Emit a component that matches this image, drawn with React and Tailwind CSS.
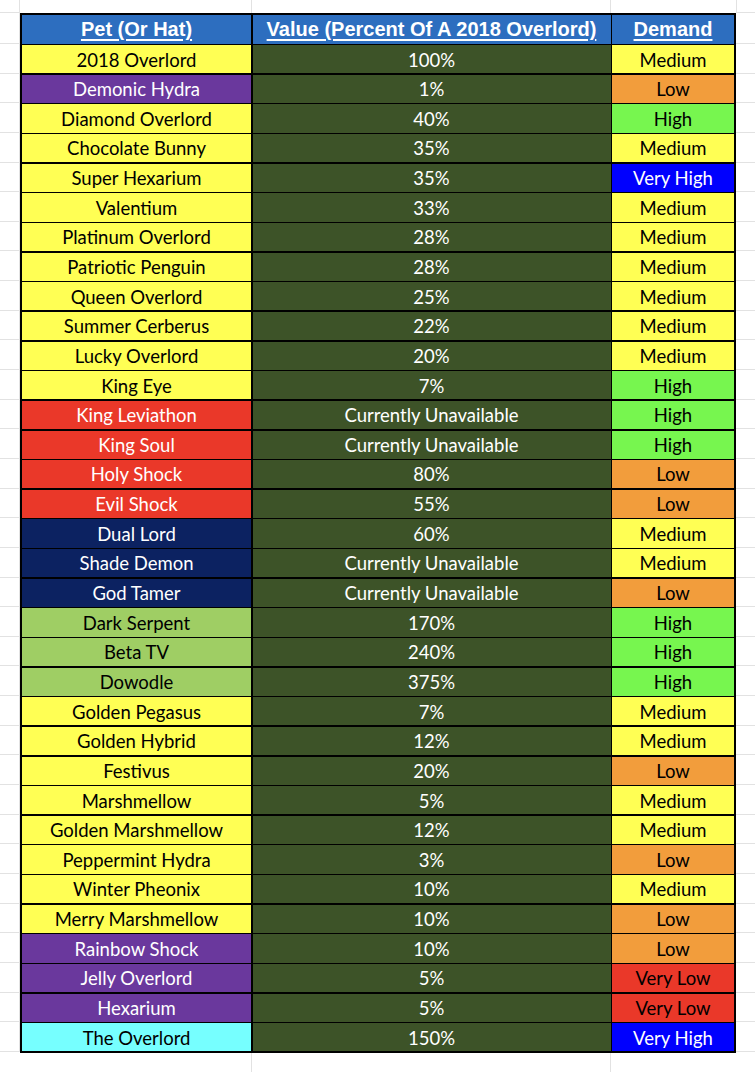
import React from "react";

const PET = {
  Y: "bg-[#ffff54] text-black",
  P: "bg-[#6a389d] text-white",
  R: "bg-[#ea3829] text-white",
  N: "bg-[#0c2261] text-white",
  G: "bg-[#9fce64] text-black",
  C: "bg-[#76ffff] text-black",
};

const DEMAND = {
  Medium: "bg-[#ffff54] text-black",
  Low: "bg-[#f29d3c] text-black",
  High: "bg-[#77f64f] text-black",
  "Very High": "bg-[#0000fe] text-white",
  "Very Low": "bg-[#ea3829] text-black",
};

const rows = [
  ["2018 Overlord", "Y", "100%", "Medium"],
  ["Demonic Hydra", "P", "1%", "Low"],
  ["Diamond Overlord", "Y", "40%", "High"],
  ["Chocolate Bunny", "Y", "35%", "Medium"],
  ["Super Hexarium", "Y", "35%", "Very High"],
  ["Valentium", "Y", "33%", "Medium"],
  ["Platinum Overlord", "Y", "28%", "Medium"],
  ["Patriotic Penguin", "Y", "28%", "Medium"],
  ["Queen Overlord", "Y", "25%", "Medium"],
  ["Summer Cerberus", "Y", "22%", "Medium"],
  ["Lucky Overlord", "Y", "20%", "Medium"],
  ["King Eye", "Y", "7%", "High"],
  ["King Leviathon", "R", "Currently Unavailable", "High"],
  ["King Soul", "R", "Currently Unavailable", "High"],
  ["Holy Shock", "R", "80%", "Low"],
  ["Evil Shock", "R", "55%", "Low"],
  ["Dual Lord", "N", "60%", "Medium"],
  ["Shade Demon", "N", "Currently Unavailable", "Medium"],
  ["God Tamer", "N", "Currently Unavailable", "Low"],
  ["Dark Serpent", "G", "170%", "High"],
  ["Beta TV", "G", "240%", "High"],
  ["Dowodle", "G", "375%", "High"],
  ["Golden Pegasus", "Y", "7%", "Medium"],
  ["Golden Hybrid", "Y", "12%", "Medium"],
  ["Festivus", "Y", "20%", "Low"],
  ["Marshmellow", "Y", "5%", "Medium"],
  ["Golden Marshmellow", "Y", "12%", "Medium"],
  ["Peppermint Hydra", "Y", "3%", "Low"],
  ["Winter Pheonix", "Y", "10%", "Medium"],
  ["Merry Marshmellow", "Y", "10%", "Low"],
  ["Rainbow Shock", "P", "10%", "Low"],
  ["Jelly Overlord", "P", "5%", "Very Low"],
  ["Hexarium", "P", "5%", "Very Low"],
  ["The Overlord", "C", "150%", "Very High"],
];

const cell =
  "flex items-center justify-center h-[28.15px] pt-[1px] text-[18.5px] leading-none font-['Lato','Open_Sans',sans-serif] whitespace-nowrap";
const head =
  "flex items-center justify-center h-[28.7px] bg-[#2d6ebf] text-white font-bold underline decoration-[1.5px] underline-offset-[3px] text-[20px] leading-none font-['Liberation_Sans',Arial,sans-serif] whitespace-nowrap";

function Gutter({ side }) {
  const b = side === "left" ? "border-r" : "border-l";
  return (
    <div className="flex flex-col">
      <div className={`h-[13px] border-b ${b} border-[#e2e2e2]`} />
      <div className={`h-[31px] border-b border-[#e2e2e2] ${side === "left" ? "border-r" : ""}`} />
      {rows.map((r, i) => (
        <div
          key={i}
          className={`h-[29.65px] border-b border-[#e2e2e2] ${side === "left" ? "border-r" : ""}`}
        />
      ))}
      <div className={`flex-1 ${b} border-[#e2e2e2]`} />
    </div>
  );
}

function Verticals({ h }) {
  return (
    <div className={`flex ${h}`}>
      <div className="w-[232px] border-r border-[#e2e2e2]" />
      <div className="w-[359px] border-r border-[#e2e2e2]" />
      <div className="flex-1" />
    </div>
  );
}

export default function App() {
  return (
    <div className="w-[755px] h-[1072px] overflow-hidden bg-white flex">
      <div className="w-[20px] shrink-0">
        <Gutter side="left" />
      </div>
      <div className="w-[716px] shrink-0 flex flex-col">
        <Verticals h="h-[13px]" />
        <div className="border-2 border-black bg-black grid grid-cols-[229px_358px_122px] gap-[1.5px]">
          <div className={head}>Pet (Or Hat)</div>
          <div className={head}>Value (Percent Of A 2018 Overlord)</div>
          <div className={head}>Demand</div>
          {rows.map(([name, c, val, dem], i) => (
            <React.Fragment key={i}>
              <div className={`${cell} ${PET[c]}`}>{name}</div>
              <div className={`${cell} bg-[#3d5328] text-white`}>{val}</div>
              <div className={`${cell} ${DEMAND[dem]}`}>{dem}</div>
            </React.Fragment>
          ))}
        </div>
        <Verticals h="flex-1" />
      </div>
      <div className="flex-1">
        <Gutter side="right" />
      </div>
    </div>
  );
}
